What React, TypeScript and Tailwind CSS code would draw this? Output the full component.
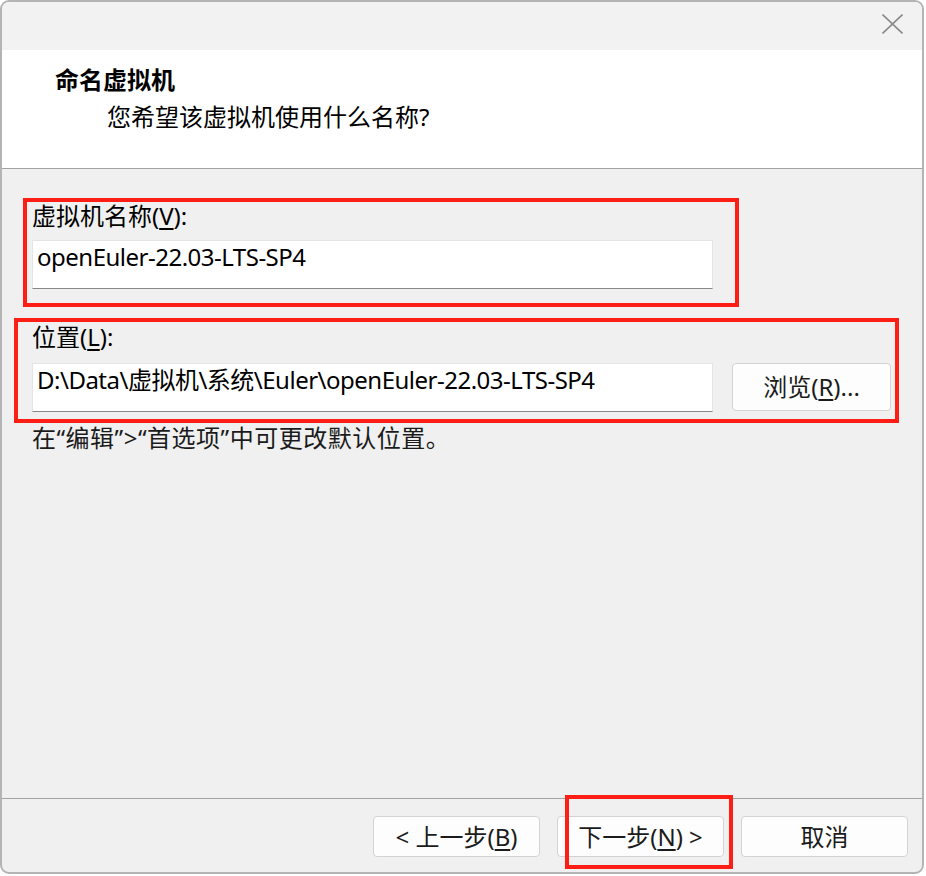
import React from "react"

const FONT = "font-['Noto_Sans','Noto_Sans_CJK_SC',sans-serif]"

function Key({ k }: { k: string }) {
  return <span className="underline underline-offset-[3px] decoration-[1.5px]">{k}</span>
}

function Button({ children, className = "" }: { children: React.ReactNode; className?: string }) {
  return (
    <div
      className={`flex items-center justify-center rounded-[4px] border border-[#d3d3d3] bg-[#fdfdfd] text-[24px] leading-[30px] text-[#1b1b1b] ${className}`}
    >
      {children}
    </div>
  )
}

function TextBox({ value }: { value: string }) {
  return (
    <div className="h-[49px] w-[681px] border border-[#e4e4e4] border-b-[#878787] bg-white pl-[4px] pt-[1px] text-[24px] leading-[30px] tracking-[-0.5px] text-black">
      {value}
    </div>
  )
}

export default function App() {
  return (
    <div className={`relative h-[876px] w-[926px] bg-white ${FONT}`}>
      <div className="flex h-[874px] w-[924px] flex-col overflow-hidden rounded-[9px] border-2 border-[#b4b4b4] bg-[#f0f0f0]">
        {/* title bar */}
        <div className="flex h-[48px] justify-end bg-[#f2f2f2] pr-[19px] pt-[12px]">
          <svg width="21" height="20" viewBox="0 0 21 20">
            <path d="M0.5 0.5 L20.5 19.5 M20.5 0.5 L0.5 19.5" stroke="#8a8a8a" strokeWidth="1.6" fill="none" />
          </svg>
        </div>

        {/* header */}
        <div className="flex h-[119px] flex-col border-b border-[#a3a3a3] bg-white pt-[15px]">
          <div className="pl-[53px] text-[24px] font-bold leading-[30px] text-black">命名虚拟机</div>
          <div className="mt-[7px] pl-[105px] text-[24px] leading-[30px] text-black">您希望该虚拟机使用什么名称?</div>
        </div>

        {/* body */}
        <div className="flex flex-1 flex-col pl-[30px] pt-[32px] text-black">
          <div className="text-[24px] leading-[30px]">
            虚拟机名称(<Key k="V" />):
          </div>
          <div className="mt-[9px]">
            <TextBox value="openEuler-22.03-LTS-SP4" />
          </div>

          <div className="mt-[33px] text-[24px] leading-[30px]">
            位置(<Key k="L" />):
          </div>
          <div className="mt-[11px] flex items-start gap-[19px]">
            <TextBox value="D:\Data\虚拟机\系统\Euler\openEuler-22.03-LTS-SP4" />
            <Button className="h-[48px] w-[159px]">
              浏览(<Key k="R" />)...
            </Button>
          </div>

          <div className="mt-[11px] text-[24px] leading-[30px] tracking-[0.5px] text-[#1b1b1b]">
            在“编辑”&gt;“首选项”中可更改默认位置。
          </div>
        </div>

        {/* footer */}
        <div className="flex h-[74px] justify-end gap-[17px] border-t border-[#a3a3a3] pr-[14px] pt-[17px]">
          <Button className="h-[41px] w-[167px]">
            &lt; 上一步(<Key k="B" />)
          </Button>
          <Button className="h-[41px] w-[167px]">
            下一步(<Key k="N" />) &gt;
          </Button>
          <Button className="h-[41px] w-[167px]">取消</Button>
        </div>
      </div>

      {/* red annotation boxes */}
      <div className="absolute left-[23px] top-[198px] h-[109px] w-[716px] border-4 border-[#ff1e16]" />
      <div className="absolute left-[14px] top-[318px] h-[105px] w-[885px] border-4 border-[#ff1e16]" />
      <div className="absolute left-[565px] top-[795px] h-[74px] w-[168px] border-4 border-[#ff1e16]" />
    </div>
  )
}
